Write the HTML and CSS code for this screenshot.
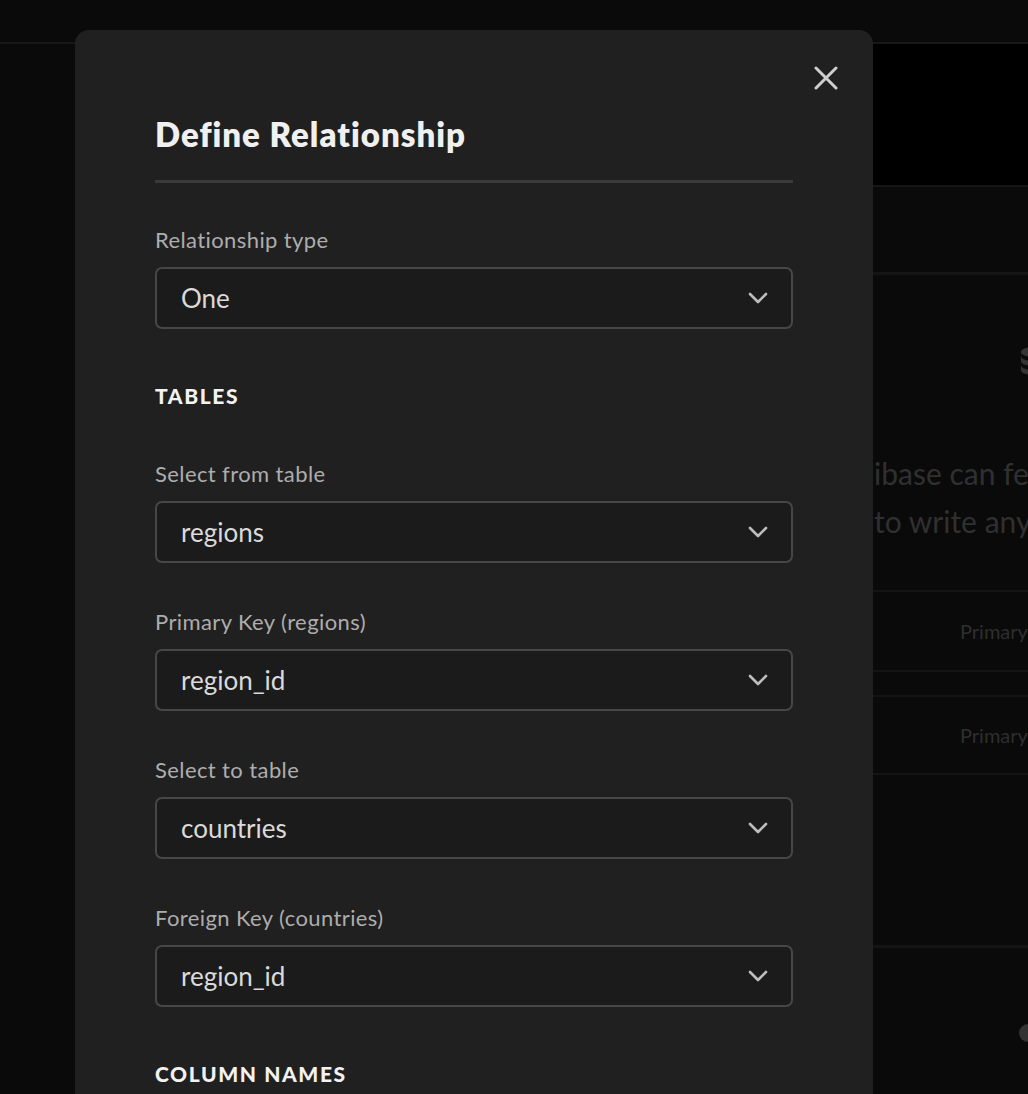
FILE: index.html
```html
<!DOCTYPE html>
<html lang="en">
<head>
    <meta charset="UTF-8">
    <meta name="viewport" content="width=device-width, initial-scale=1.0">
    <title>Define Relationship</title>
    <link rel="stylesheet" href="styles.css">
</head>
<body>
    <!-- Page behind the dialog -->
    <div class="page">
        <div class="topbar"></div>
        <div class="workspace">
            <div class="canvas"></div>
            <div class="panel">
                <div class="panel-head"></div>
                <div class="panel-tabs"></div>
                <div class="panel-empty">
                    <svg class="db-icon" width="30" height="30" viewBox="0 0 30 30">
                        <ellipse cx="15" cy="6" rx="12" ry="5" fill="#343434"/>
                        <path d="M3 10 v5 c0 3 5.5 5 12 5 s12 -2 12 -5 v-5 c0 3 -5.5 5 -12 5 s-12 -2 -12 -5z" fill="#343434"/>
                        <path d="M3 19 v5 c0 3 5.5 5 12 5 s12 -2 12 -5 v-5 c0 3 -5.5 5 -12 5 s-12 -2 -12 -5z" fill="#343434"/>
                    </svg>
                    <p class="empty-text">ibase can fetch your data</p>
                    <p class="empty-text">to write any SQL</p>
                </div>
                <div class="key-row">Primary</div>
                <div class="key-row key-row-next">Primary</div>
                <div class="panel-foot">
                    <span class="foot-dot"></span>
                </div>
            </div>
        </div>
    </div>

    <!-- Dialog -->
    <div class="overlay">
        <div class="modal">
            <button class="close-btn" aria-label="Close">
                <svg width="24" height="24" viewBox="0 0 24 24">
                    <path d="M2 2 L22 22 M22 2 L2 22" stroke="#cfcfcf" stroke-width="3" stroke-linecap="round"/>
                </svg>
            </button>
            <h1 class="modal-title">Define Relationship</h1>
            <div class="divider"></div>

            <div class="field first">
                <label>Relationship type</label>
                <div class="select">
                    <span>One</span>
                    <svg class="chevron" width="20" height="12" viewBox="0 0 20 12"><path d="M2 2 L10 10 L18 2" fill="none" stroke="#bdbdbd" stroke-width="2.6" stroke-linecap="round" stroke-linejoin="round"/></svg>
                </div>
            </div>

            <h2 class="section-title">TABLES</h2>

            <div class="field first">
                <label>Select from table</label>
                <div class="select">
                    <span>regions</span>
                    <svg class="chevron" width="20" height="12" viewBox="0 0 20 12"><path d="M2 2 L10 10 L18 2" fill="none" stroke="#bdbdbd" stroke-width="2.6" stroke-linecap="round" stroke-linejoin="round"/></svg>
                </div>
            </div>
            <div class="field">
                <label>Primary Key (regions)</label>
                <div class="select">
                    <span>region_id</span>
                    <svg class="chevron" width="20" height="12" viewBox="0 0 20 12"><path d="M2 2 L10 10 L18 2" fill="none" stroke="#bdbdbd" stroke-width="2.6" stroke-linecap="round" stroke-linejoin="round"/></svg>
                </div>
            </div>
            <div class="field">
                <label>Select to table</label>
                <div class="select">
                    <span>countries</span>
                    <svg class="chevron" width="20" height="12" viewBox="0 0 20 12"><path d="M2 2 L10 10 L18 2" fill="none" stroke="#bdbdbd" stroke-width="2.6" stroke-linecap="round" stroke-linejoin="round"/></svg>
                </div>
            </div>
            <div class="field">
                <label>Foreign Key (countries)</label>
                <div class="select">
                    <span>region_id</span>
                    <svg class="chevron" width="20" height="12" viewBox="0 0 20 12"><path d="M2 2 L10 10 L18 2" fill="none" stroke="#bdbdbd" stroke-width="2.6" stroke-linecap="round" stroke-linejoin="round"/></svg>
                </div>
            </div>

            <h2 class="section-title">COLUMN NAMES</h2>
        </div>
    </div>
</body>
</html>
```

FILE: styles.css
```css
* {
    margin: 0;
    padding: 0;
    box-sizing: border-box;
}

html, body {
    height: 100%;
    overflow: hidden;
}

body {
    font-family: Lato, "Liberation Sans", sans-serif;
    background: #0a0a0a;
}

/* Background page */
.page {
    height: 100%;
    display: flex;
    flex-direction: column;
}

.topbar {
    height: 44px;
    border-bottom: 2px solid #181818;
    background: #0a0a0a;
}

.workspace {
    flex: 1;
    display: flex;
}

.canvas {
    flex: none;
    width: 873px;
    background: #0a0a0a;
}

.panel {
    flex: 1;
    min-width: 0;
    display: flex;
    flex-direction: column;
    overflow: hidden;
}

.panel-head {
    height: 143px;
    background: #000;
    border-bottom: 2px solid #161616;
}

.panel-tabs {
    height: 88px;
    border-bottom: 3px solid #141414;
}

.panel-empty {
    height: 317px;
    border-bottom: 2px solid #141414;
    padding-top: 71px;
}

.db-icon {
    display: block;
    margin-left: 145px;
    margin-bottom: 73px;
}

.empty-text {
    font-size: 30px;
    line-height: 48px;
    color: #303030;
    white-space: nowrap;
    padding-left: 1px;
}

.key-row {
    height: 80px;
    border-bottom: 2px solid #141414;
    padding-left: 87px;
    display: flex;
    align-items: center;
    font-size: 20px;
    color: #2e2e2e;
    white-space: nowrap;
}

.key-row-next {
    margin-top: 23px;
    border-top: 2px solid #141414;
}

.panel-foot {
    margin-top: 170px;
    border-top: 3px solid #141414;
    padding: 76px 0 0 146px;
}

.foot-dot {
    display: block;
    width: 18px;
    height: 18px;
    border-radius: 50%;
    background: #333;
}

/* Dialog */
.overlay {
    position: fixed;
    inset: 0;
}

.modal {
    position: absolute;
    top: 30px;
    left: 75px;
    width: 798px;
    min-height: 1100px;
    background: #202020;
    border-radius: 14px;
    padding: 84px 80px 40px;
}

.close-btn {
    position: absolute;
    top: 36px;
    right: 35px;
    background: none;
    border: none;
    width: 24px;
    height: 24px;
    cursor: pointer;
}

.close-btn svg {
    display: block;
}

.modal-title {
    font-size: 33px;
    line-height: 40px;
    font-weight: 800;
    letter-spacing: 1px;
    color: #f0f0f0;
}

.divider {
    height: 3px;
    background: #3a3a3a;
    margin-top: 26px;
}

.field {
    margin-top: 47px;
}

.field.first {
    margin-top: 54px;
}

.divider + .field.first {
    margin-top: 45px;
}

.field label {
    display: block;
    font-size: 22px;
    line-height: 24px;
    letter-spacing: 0.4px;
    color: #adadad;
    margin-bottom: 15px;
}

.select {
    height: 62px;
    border: 2px solid #474747;
    border-radius: 7px;
    background: #1b1b1b;
    display: flex;
    align-items: center;
    justify-content: space-between;
    padding: 0 23px 0 24px;
    font-size: 26px;
    color: #dadada;
}

.chevron {
    display: block;
}

.section-title {
    margin-top: 55px;
    font-size: 21px;
    line-height: 24px;
    font-weight: 900;
    letter-spacing: 1.6px;
    color: #f2f2f2;
}
```
